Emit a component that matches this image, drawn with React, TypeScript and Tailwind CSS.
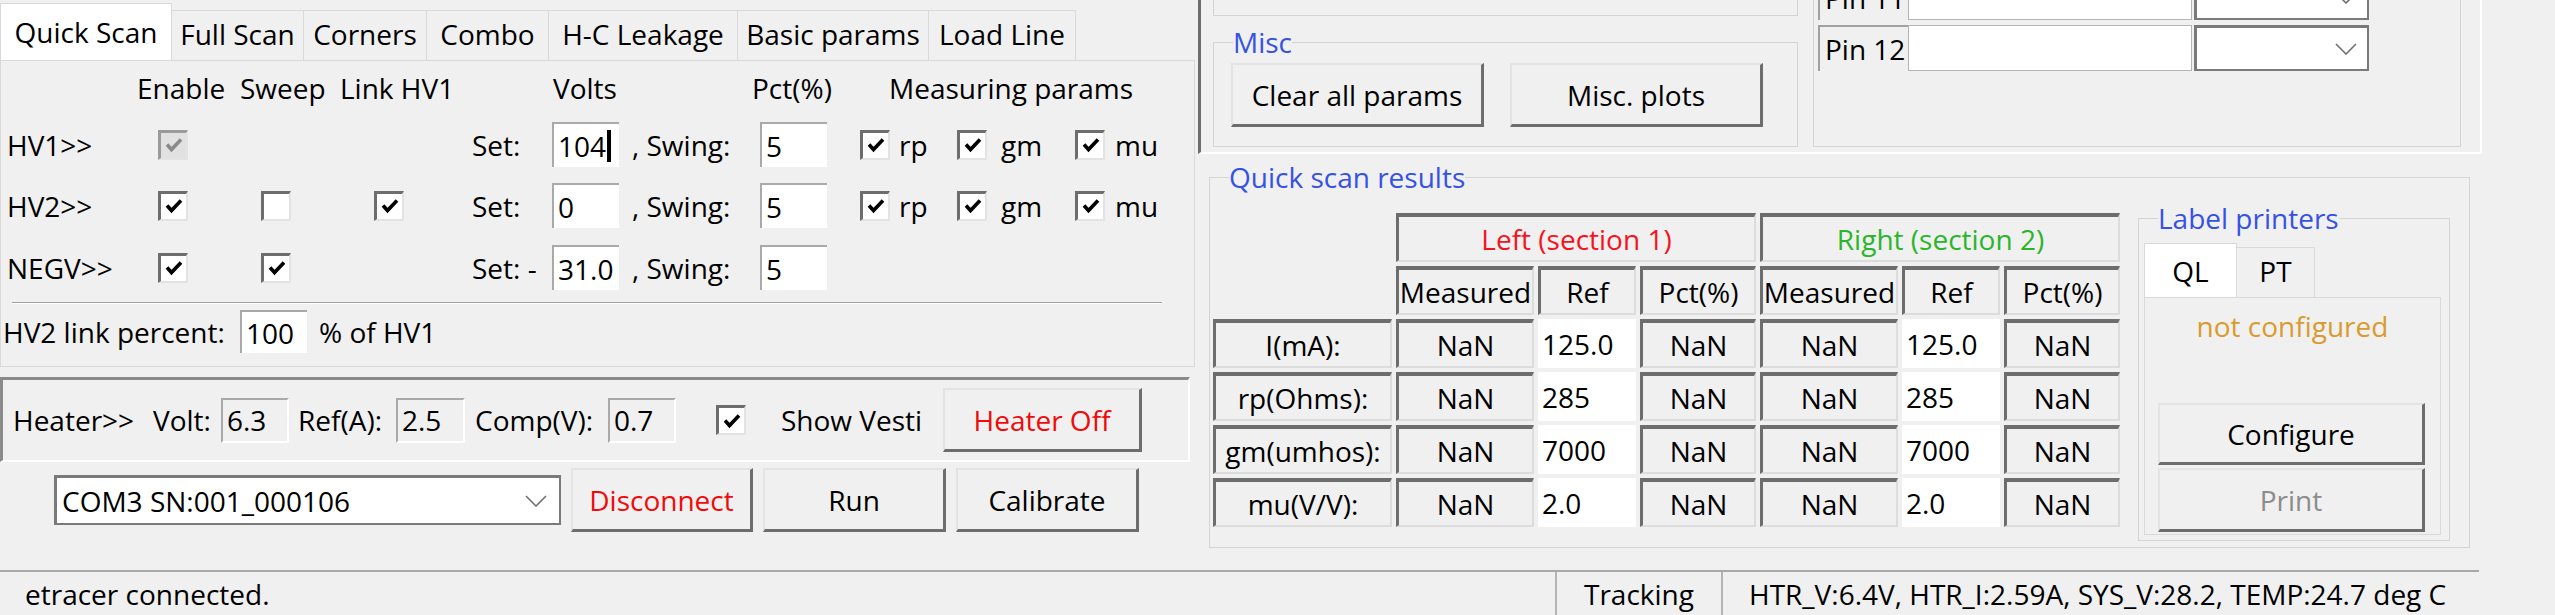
import type { ReactNode } from "react";

// classic 3D edges used by the Tk-style widgets
const raised =
  "bg-[#f0f0f0] border-t-2 border-l-2 border-t-[#e3e3e3] border-l-[#e3e3e3] border-r-[3px] border-b-[3px] border-r-[#6d6d6d] border-b-[#6d6d6d]";
const sunkenCell =
  "bg-[#f0f0f0] border-t-[4px] border-l-[3px] border-t-[#6d6d6d] border-l-[#6d6d6d] border-r-2 border-b-2 border-r-[#dcdcdc] border-b-[#dcdcdc]";

function Button({
  children,
  className = "",
  tone = "normal",
}: {
  children: ReactNode;
  className?: string;
  tone?: "normal" | "danger" | "muted";
}) {
  const color = tone === "danger" ? "text-[#f00a0a]" : tone === "muted" ? "text-[#8c8c8c]" : "text-black";
  return (
    <button type="button" className={`${raised} flex items-center justify-center ${color} ${className}`}>
      {children}
    </button>
  );
}

function Check({ on = true, disabled = false }: { on?: boolean; disabled?: boolean }) {
  return (
    <span
      className={`flex h-[30px] w-[30px] shrink-0 items-center justify-center border-t-[3px] border-l-[3px] border-r-2 border-b-2 border-r-[#e3e3e3] border-b-[#e3e3e3] ${
        disabled ? "border-t-[#9a9a9a] border-l-[#9a9a9a] bg-[#e1e1e1]" : "border-t-[#6d6d6d] border-l-[#6d6d6d] bg-white"
      }`}
    >
      {on && (
        <svg width="18" height="16" viewBox="0 0 18 16">
          <path d="M2 7.5 L6.5 12.5 L16 2.5" fill="none" stroke={disabled ? "#8a8a8a" : "#000"} strokeWidth="3.6" />
        </svg>
      )}
    </span>
  );
}

function Entry({
  value,
  className = "",
  caret = false,
  readOnly = false,
}: {
  value: string;
  className?: string;
  caret?: boolean;
  readOnly?: boolean;
}) {
  return (
    <div
      className={`flex shrink-0 items-center border-t-2 border-l-2 border-t-[#a9a9a9] border-l-[#a9a9a9] pl-[4px] ${
        readOnly ? "border-r-2 border-b-2 border-r-white border-b-white bg-[#f0f0f0]" : "bg-white"
      } ${className}`}
    >
      {value}
      {caret && <span className="ml-[1px] h-[32px] w-[4px] bg-black" />}
    </div>
  );
}

function Chevron() {
  return (
    <svg width="22" height="12" viewBox="0 0 22 12">
      <path d="M1 1 L11 11 L21 1" fill="none" stroke="#707070" strokeWidth="1.6" />
    </svg>
  );
}

function Group({
  title,
  className = "",
  bodyClass = "",
  children,
}: {
  title: string;
  className?: string;
  bodyClass?: string;
  children: ReactNode;
}) {
  return (
    <div className={`flex flex-col ${className}`}>
      <div className="flex h-[34px] items-end">
        <div className="h-[17px] w-[20px] border-t border-l border-[#d4d4d4]" />
        <span className="self-center leading-[34px] text-[#3552e4]">{title}</span>
        <div className="h-[17px] flex-1 border-t border-r border-[#d4d4d4]" />
      </div>
      <div className={`flex-1 border-x border-b border-[#d4d4d4] ${bodyClass}`}>{children}</div>
    </div>
  );
}

const tabs = [
  { label: "Full Scan", w: "w-[132px]" },
  { label: "Corners", w: "w-[123px]" },
  { label: "Combo", w: "w-[122px]" },
  { label: "H-C Leakage", w: "w-[189px]" },
  { label: "Basic params", w: "w-[191px]" },
  { label: "Load Line", w: "w-[147px]" },
];

function MeasureChecks() {
  return (
    <div className="ml-[33px] flex items-center">
      <Check />
      <span className="ml-[9px] w-[58px]">rp</span>
      <Check />
      <span className="ml-[14px] w-[74px]">gm</span>
      <Check />
      <span className="ml-[10px]">mu</span>
    </div>
  );
}

function ScanRow({
  label,
  enable,
  sweep,
  link,
  setLabel,
  volts,
  caret = false,
  measure = false,
  className = "",
}: {
  label: string;
  enable?: ReactNode;
  sweep?: ReactNode;
  link?: ReactNode;
  setLabel: string;
  volts: string;
  caret?: boolean;
  measure?: boolean;
  className?: string;
}) {
  return (
    <div className={`flex h-[45px] items-center ${className}`}>
      <span className="w-[157px] pl-[6px]">{label}</span>
      <span className="w-[103px]">{enable}</span>
      <span className="w-[113px]">{sweep}</span>
      <span className="w-[98px]">{link}</span>
      <span className="w-[80px]">{setLabel}</span>
      <Entry value={volts} caret={caret} className="h-[45px] w-[67px]" />
      <span className="ml-[13px] w-[128px]">, Swing:</span>
      <Entry value="5" className="h-[45px] w-[67px]" />
      {measure && <MeasureChecks />}
    </div>
  );
}

function QuickScanTab() {
  return (
    <div className="h-[307px] w-[1195px] border border-[#d9d9d9] pt-[7px]">
      <div className="flex h-[40px] items-center">
        <span className="w-[136px]" />
        <span className="w-[103px]">Enable</span>
        <span className="w-[100px]">Sweep</span>
        <span className="w-[213px]">Link HV1</span>
        <span className="w-[199px]">Volts</span>
        <span className="w-[137px]">Pct(%)</span>
        <span>Measuring params</span>
      </div>
      <ScanRow className="mt-[14px]" label="HV1>>" enable={<Check disabled />} setLabel="Set:" volts="104" caret measure />
      <ScanRow
        className="mt-[16px]"
        label="HV2>>"
        enable={<Check />}
        sweep={<Check on={false} />}
        link={<Check />}
        setLabel="Set:"
        volts="0"
        measure
      />
      <ScanRow className="mt-[17px]" label="NEGV>>" enable={<Check />} sweep={<Check />} setLabel="Set: -" volts="31.0" />
      <div className="mt-[12px] ml-[11px] h-[2px] w-[1150px] border-t border-b border-t-[#a0a0a0] border-b-white" />
      <div className="mt-[6px] flex h-[43px] items-center">
        <span className="w-[239px] pl-[2px]">HV2 link percent:</span>
        <Entry value="100" className="h-[43px] w-[67px]" />
        <span className="ml-[12px]">% of HV1</span>
      </div>
    </div>
  );
}

function LeftColumn() {
  return (
    <div className="flex w-[1198px] shrink-0 flex-col">
      <div className="flex h-[60px] items-end">
        <div className="flex h-[57px] w-[172px] items-center justify-center border-x border-t border-[#d9d9d9] bg-white">
          Quick Scan
        </div>
        {tabs.map((t) => (
          <div key={t.label} className={`flex h-[50px] items-center justify-center border-t border-r border-[#d9d9d9] pb-[4px] ${t.w}`}>
            {t.label}
          </div>
        ))}
      </div>
      <QuickScanTab />

      <div className="mt-[10px] flex h-[85px] w-[1190px] items-center border-t-[3px] border-l-[3px] border-t-[#8a8a8a] border-l-[#8a8a8a] border-r-2 border-b-2 border-r-white border-b-white pl-[10px]">
        <span className="w-[140px]">Heater&gt;&gt;</span>
        <span className="w-[68px]">Volt:</span>
        <Entry value="6.3" readOnly className="h-[45px] w-[68px]" />
        <span className="ml-[9px] w-[98px]">Ref(A):</span>
        <Entry value="2.5" readOnly className="h-[45px] w-[69px]" />
        <span className="ml-[10px] w-[133px]">Comp(V):</span>
        <Entry value="0.7" readOnly className="h-[45px] w-[68px]" />
        <span className="ml-[40px]">
          <Check />
        </span>
        <span className="ml-[35px] w-[162px]">Show Vesti</span>
        <Button tone="danger" className="h-[64px] w-[199px]">
          Heater Off
        </Button>
      </div>

      <div className="mt-[6px] flex h-[64px] items-center pl-[54px]">
        <div className="flex h-[50px] w-[507px] items-center justify-between border-2 border-t-[3px] border-l-[3px] border-[#7a7a7a] bg-white pl-[5px] pr-[12px]">
          <span>COM3 SN:001_000106</span>
          <Chevron />
        </div>
        <Button tone="danger" className="ml-[10px] h-[64px] w-[182px]">
          Disconnect
        </Button>
        <Button className="ml-[10px] h-[64px] w-[183px]">Run</Button>
        <Button className="ml-[10px] h-[64px] w-[183px]">Calibrate</Button>
      </div>
    </div>
  );
}

function PinRow({ pin }: { pin: string }) {
  return (
    <div className="flex h-[46px]">
      <div className="flex w-[90px] items-center border-t-2 border-l-2 border-[#a0a0a0] bg-[#f0f0f0] pl-[5px]">{pin}</div>
      <div className="w-[284px] border border-[#b4b4b4] bg-white" />
      <div className="ml-[2px] flex w-[175px] items-center justify-end border-2 border-t-[3px] border-l-[3px] border-[#7a7a7a] bg-white pr-[10px]">
        <Chevron />
      </div>
    </div>
  );
}

const subHeads = ["Measured", "Ref", "Pct(%)", "Measured", "Ref", "Pct(%)"];

const results = [
  { label: "I(mA):", ref: "125.0" },
  { label: "rp(Ohms):", ref: "285" },
  { label: "gm(umhos):", ref: "7000" },
  { label: "mu(V/V):", ref: "2.0" },
];

function ResultsTable() {
  return (
    <div className="mt-[19px] grid grid-cols-[179px_138px_98px_116px_138px_98px_116px] auto-rows-[49px] gap-x-[4px] gap-y-[4px]">
      <div />
      <div className={`${sunkenCell} col-span-3 flex items-center justify-center text-[#f5141e]`}>Left (section 1)</div>
      <div className={`${sunkenCell} col-span-3 flex items-center justify-center text-[#2bb52b]`}>Right (section 2)</div>

      <div />
      {subHeads.map((h, i) => (
        <div key={i} className={`${sunkenCell} flex items-center justify-center`}>
          {h}
        </div>
      ))}

      {results.map((r) => (
        <div key={r.label} className="contents">
          <div className={`${sunkenCell} flex items-center justify-center`}>{r.label}</div>
          <div className={`${sunkenCell} flex items-center justify-center`}>NaN</div>
          <div className="flex items-center bg-white pl-[4px]">{r.ref}</div>
          <div className={`${sunkenCell} flex items-center justify-center`}>NaN</div>
          <div className={`${sunkenCell} flex items-center justify-center`}>NaN</div>
          <div className="flex items-center bg-white pl-[4px]">{r.ref}</div>
          <div className={`${sunkenCell} flex items-center justify-center`}>NaN</div>
        </div>
      ))}
    </div>
  );
}

function LabelPrinters() {
  return (
    <Group title="Label printers" className="ml-[18px] mt-[7px] h-[340px] w-[312px]" bodyClass="pl-[5px] pt-[8px]">
      <div className="flex h-[54px] items-end">
        <div className="flex h-[54px] w-[93px] items-center justify-center border-x border-t border-[#d9d9d9] bg-white">QL</div>
        <div className="flex h-[50px] w-[78px] items-center justify-center border-t border-r border-[#d9d9d9] pb-[4px]">PT</div>
      </div>
      <div className="flex h-[238px] w-[297px] flex-col border border-[#d9d9d9] pl-[13px] pb-[2px]">
        <div className="mt-[8px] h-[40px] pr-[13px] text-center leading-[40px] text-[#d99b2e]">not configured</div>
        <Button className="mt-auto h-[62px] w-[267px]">Configure</Button>
        <Button tone="muted" className="mt-[3px] h-[64px] w-[267px]">
          Print
        </Button>
      </div>
    </Group>
  );
}

function RightColumn() {
  return (
    <div className="flex w-[1284px] shrink-0 flex-col">
      <div className="flex h-[154px] border-l-[3px] border-l-[#6d6d6d] border-b-2 border-b-white border-r-2 border-r-white">
        <div className="ml-[12px] flex w-[585px] flex-col">
          <div className="h-[16px] border-x border-b border-[#d4d4d4]" />
          <Group title="Misc" className="mt-[9px] h-[122px]" bodyClass="flex gap-[26px] pl-[17px] pt-[4px]">
            <Button className="h-[64px] w-[253px]">Clear all params</Button>
            <Button className="h-[64px] w-[253px]">Misc. plots</Button>
          </Group>
        </div>
        <div className="ml-[15px] h-[147px] w-[648px] overflow-hidden border-x border-b border-[#d4d4d4] pl-[4px]">
          <div className="-mt-[26px] flex flex-col gap-[5px]">
            <PinRow pin="Pin 11" />
            <PinRow pin="Pin 12" />
          </div>
        </div>
      </div>

      <Group title="Quick scan results" className="ml-[11px] mt-[6px] h-[388px] w-[1261px]" bodyClass="flex items-start pl-[3px]">
        <ResultsTable />
        <LabelPrinters />
      </Group>
    </div>
  );
}

export default function App() {
  return (
    <div className="flex h-[615px] w-[2555px] flex-col overflow-hidden bg-[#f0f0f0] font-['Open_Sans',sans-serif] text-[28px] leading-none text-black">
      <div className="flex h-[570px]">
        <LeftColumn />
        <RightColumn />
      </div>
      <div className="flex h-[45px] w-[2479px] border-t-2 border-[#a8a8a8]">
        <div className="flex w-[1555px] items-center pl-[25px]">etracer connected.</div>
        <div className="flex w-[166px] items-center border-l-2 border-[#b4b4b4] pl-[27px]">Tracking</div>
        <div className="flex flex-1 items-center border-l-2 border-[#b4b4b4] pl-[26px]">
          HTR_V:6.4V, HTR_I:2.59A, SYS_V:28.2, TEMP:24.7 deg C
        </div>
      </div>
    </div>
  );
}
